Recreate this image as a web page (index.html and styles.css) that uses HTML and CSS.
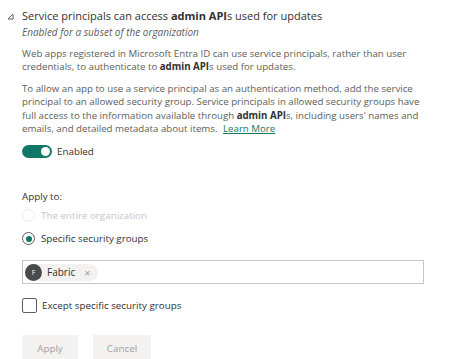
FILE: index.html
```html
<!DOCTYPE html>
<html lang="en">
<head>
  <meta charset="UTF-8">
  <title>Admin API settings</title>
  <link rel="stylesheet" href="styles.css">
</head>
<body>
  <div class="setting">
    <div class="setting-head">
      <svg class="caret" width="7" height="7" viewBox="0 0 7 7"><path d="M6 1 L6 6 L1 6 Z" fill="none" stroke="#605e5c" stroke-width="1"/></svg>
      <div>
        <div class="title">Service principals can access <b>admin API</b>s used for updates</div>
        <div class="subtitle">Enabled for a subset of the organization</div>
      </div>
    </div>

    <div class="body">
      <p>Web apps registered in Microsoft Entra ID can use service principals, rather than user credentials, to authenticate to <b>admin API</b>s used for updates.</p>
      <p>To allow an app to use a service principal as an authentication method, add the service principal to an allowed security group. Service principals in allowed security groups have full access to the information available through <b>admin API</b>s, including users' names and emails, and detailed metadata about items. <a href="#">Learn More</a></p>

      <div class="toggle-row">
        <span class="toggle"><span class="knob"></span></span>
        <span>Enabled</span>
      </div>

      <div class="apply-label">Apply to:</div>
      <div class="radio-row disabled"><span class="radio"></span>The entire organization</div>
      <div class="radio-row second"><span class="radio checked"></span>Specific security groups</div>

      <div class="picker">
        <span class="chip"><span class="avatar">F</span>Fabric<span class="remove">&#x2715;</span></span>
      </div>

      <div class="check-row"><span class="checkbox"></span>Except specific security groups</div>

      <div class="actions">
        <button>Apply</button>
        <button>Cancel</button>
      </div>
    </div>
  </div>
</body>
</html>
```

FILE: styles.css
```css
body { margin: 0; font-family: "Open Sans", sans-serif; color: #323130; background: #fff; }
.setting { padding: 8px 0 0 7px; }
.setting-head { display: flex; align-items: flex-start; gap: 8px; }
.caret { margin-top: 5px; }
.title { font-size: 11px; line-height: 16px; }
.title b { font-weight: 700; }
.subtitle { font-size: 10px; font-style: italic; color: #605e5c; line-height: 14px; margin-top: 1px; }
.body { padding-left: 15px; font-size: 9.7px; color: #605e5c; }
.body p { margin: 8px 0 8px; line-height: 13.4px; max-width: 406px; }
.body b { color: #323130; }
.body a { color: #117865; margin-left: 3px; }
.toggle-row { display: flex; align-items: center; gap: 5px; color: #323130; font-size: 9.8px; margin-top: 10px; }
.toggle { width: 30px; height: 13px; border-radius: 7px; background: #117865; position: relative; }
.knob { position: absolute; right: 2px; top: 2px; width: 9px; height: 9px; border-radius: 50%; background: #fff; }
.apply-label { margin-top: 32px; font-size: 9.8px; color: #323130; }
.radio-row { display: flex; align-items: center; gap: 6px; font-size: 9.8px; color: #323130; margin-top: 6px; }
.radio-row.second { margin-top: 10px; }
.radio-row.disabled { color: #c8c6c4; }
.radio { width: 13px; height: 13px; border-radius: 50%; border: 1px solid #605e5c; box-sizing: border-box; position: relative; }
.disabled .radio { border-color: #edebe9; }
.radio.checked::after { content: ""; position: absolute; left: 2.5px; top: 2.5px; width: 6px; height: 6px; border-radius: 50%; background: #117865; }
.picker { margin-top: 15px; width: 402px; height: 24px; border: 1px solid #c8c6c4; box-sizing: border-box; display: flex; align-items: center; padding-left: 2px; }
.chip { display: flex; align-items: center; height: 17px; background: #f3f2f1; border-radius: 9px; padding-right: 7px; font-size: 10px; color: #323130; }
.avatar { width: 17px; height: 17px; border-radius: 50%; background: #4a4a4a; color: #fff; font-size: 7px; display: flex; align-items: center; justify-content: center; margin-right: 5px; }
.remove { margin-left: 9px; font-size: 8px; color: #a19f9d; }
.check-row { display: flex; align-items: center; gap: 5px; font-size: 9.8px; color: #323130; margin-top: 14px; }
.checkbox { width: 15px; height: 15px; border: 1px solid #605e5c; border-radius: 2px; box-sizing: border-box; }
.actions { display: flex; gap: 15px; margin-top: 22px; }
.actions button { font-family: inherit; font-size: 9.8px; color: #a19f9d; background: #f3f2f1; border: none; height: 30px; padding: 0 0 4px; width: 56px; }
.actions button + button { width: 58px; }
```
